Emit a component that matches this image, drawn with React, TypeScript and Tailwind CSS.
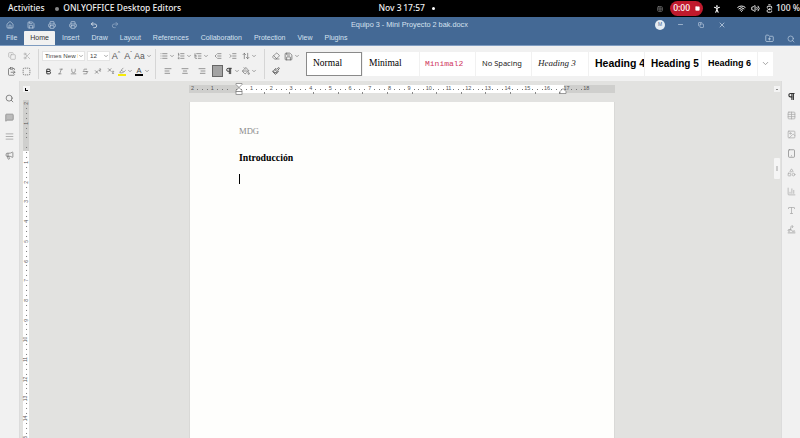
import React from "react";
import {
  Home, Save, Printer, Undo2, Redo2, Minus, X, Copy, FolderPlus, Search, Scissors, ClipboardPaste, BoxSelect,
  ChevronDown, Bold, Italic, Underline, Strikethrough, Superscript, Subscript, Highlighter, List, ListOrdered, ListTree,
  IndentDecrease, IndentIncrease, ArrowUpDown, AlignLeft, AlignCenter, AlignRight, Pilcrow, PaintBucket, Eraser, Paintbrush,
  MessageSquare, AlignJustify, Megaphone, Table, Image, Tablet, Shapes, BarChart3, Type, Signature, Grid2x2, Square,
  PersonStanding, Wifi, Volume2, BatteryCharging, Circle,
} from "lucide-react";

const sans = "font-['Liberation_Sans',Arial,sans-serif]";
const serif = "font-['Liberation_Serif','Times_New_Roman',serif]";

function Chev({ className = "" }: { className?: string }) {
  return <ChevronDown size={6} strokeWidth={2} className={"text-[#555] " + className} />;
}

function Cell({ w, children, className = "" }: { w: string; children?: React.ReactNode; className?: string }) {
  return <div className={"flex items-center justify-center gap-[1px] h-[15px] " + w + " " + className}>{children}</div>;
}

function Divider() {
  return <div className="w-px h-[30px] bg-[#d6d6d6] shrink-0" />;
}

function TextA({ mark, cls = "" }: { mark?: string; cls?: string }) {
  return (
    <span className={"text-[9px] leading-none text-[#555] " + sans + " " + cls}>
      A{mark ? <span className="text-[5px] align-super">{mark}</span> : null}
    </span>
  );
}

const styles = [
  { t: "Normal", w: "w-[56px]", c: "text-[9.5px] text-black pl-[6px] " + serif, active: true },
  { t: "Minimal", w: "w-[56px]", c: "text-[9.5px] text-black pl-[6px] " + serif },
  { t: "Minimal2", w: "w-[55px]", c: "text-[8px] text-[#d0385f] pl-[5px] font-['Liberation_Mono',monospace]" },
  { t: "No Spacing", w: "w-[55px]", c: "text-[7.5px] text-[#222] pl-[6px] font-['Noto_Sans',sans-serif]" },
  { t: "Heading 3", w: "w-[56px]", c: "text-[9px] italic text-[#222] pl-[6px] " + serif },
  { t: "Heading 4", w: "w-[55px]", c: "text-[10.5px] font-bold text-black pl-[6px] " + sans },
  { t: "Heading 5", w: "w-[56px]", c: "text-[10px] font-bold text-black pl-[6px] " + sans },
  { t: "Heading 6", w: "w-[55px]", c: "text-[9px] font-bold text-black pl-[6px] " + sans },
];

const tabs = ["Insert", "Draw", "Layout", "References", "Collaboration", "Protection", "View", "Plugins"];

const hMarks: (string | null)[] = [];
for (let i = -2; i <= 18; i++) {
  hMarks.push(i === 0 ? "" : String(Math.abs(i)));
  if (i < 18) hMarks.push(null, null, null);
}

const vMarks: (string | null)[] = [];
for (let i = -2; i <= 15; i++) {
  vMarks.push(i === 0 ? "" : String(Math.abs(i)));
  if (i < 15) vMarks.push(null, null, null);
}

function HRuler() {
  return (
    <div className="relative w-[426px] h-[8px] flex bg-[#cfcfcd] shrink-0">
      <div className="ml-[50px] w-[325px] h-full bg-white" />
      <div className={"absolute left-[0px] top-0 h-full flex items-center pl-[0.5px] " + sans}>
        <span className="w-[0.6px]" />
        {hMarks.map((m, i) => (
          <span key={i} className="w-[4.93px] shrink-0 flex justify-center text-[5.5px] leading-none text-[#555]">
            {m === null ? <span className="block w-px h-px bg-[#777]" /> : m}
          </span>
        ))}
      </div>
      {/* tab stops below the ruler */}
      <div className="absolute left-[75px] top-[7px] flex gap-[23.6px]">
        {Array.from({ length: 13 }).map((_, i) => (
          <span key={i} className="block w-px h-[1.5px] bg-[#888]" />
        ))}
      </div>
      {/* indent markers */}
      <svg className="absolute left-[45px] -top-[2px]" width="10" height="12" viewBox="0 0 10 12">
        <path d="M2 .5h6v1L5 4.5 2 1.5zM5 4.5l3 3.2v.8H2v-.8z" fill="#fff" stroke="#777" strokeWidth=".7" />
        <rect x="2" y="8.5" width="6" height="3" fill="#fff" stroke="#777" strokeWidth=".7" />
      </svg>
      <svg className="absolute left-[370px] top-[3px]" width="8" height="6" viewBox="0 0 8 6">
        <path d="M4 .5l3 3v2H1v-2z" fill="#fff" stroke="#777" strokeWidth=".7" />
      </svg>
    </div>
  );
}

function VRuler() {
  return (
    <div className="relative w-[6px] h-[338px] bg-white">
      <div className="w-full h-[51px] bg-[#cfcfcd]" />
      <div className={"absolute left-0 top-[1px] w-full flex flex-col items-center " + sans}>
        {vMarks.map((m, i) => (
          <span key={i} className="h-[4.93px] shrink-0 flex items-center justify-center text-[5px] leading-none text-[#555] -rotate-90">
            {m === null ? <span className="block w-px h-px bg-[#777]" /> : m}
          </span>
        ))}
      </div>
    </div>
  );
}

export default function App() {
  const ic = "text-[#666]";
  const dim = "text-[#aaa]";
  return (
    <div className={"w-[800px] h-[438px] overflow-hidden flex flex-col bg-[#e2e2e0] " + sans}>
      {/* GNOME top bar */}
      <div className="h-[17px] bg-black text-[#eee] flex items-center shrink-0 text-[8.5px] font-['Noto_Sans',sans-serif] font-medium">
        <span className="ml-[8px] w-[50px] leading-none">Activities</span>
        <span className="block w-[4px] h-[4px] rounded-full bg-[#888] mr-[2px] -ml-[2px]" />
        <span className="w-[319px] ml-[2px] leading-none">ONLYOFFICE Desktop Editors</span>
        <span className="w-[25px] leading-none whitespace-nowrap">Nov 3</span>
        <span className="w-[29px] leading-none">17:57</span>
        <span className="block w-[3px] h-[3px] rounded-full bg-white" />
        <div className="ml-[222px]"><Grid2x2 size={6} className="text-[#aaa]" /></div>
        <div className="ml-[7px] w-[34px] h-[15px] rounded-full bg-[#bf1a2d] flex items-center justify-center gap-[5px] text-white text-[8.5px]">
          <span className="leading-none">0:00</span>
          <Square size={5} fill="white" stroke="white" />
        </div>
        <PersonStanding size={10} strokeWidth={2.6} className="ml-[9px] text-white" />
        <Wifi size={9} strokeWidth={2.6} className="ml-[15px] text-white" />
        <Volume2 size={9} strokeWidth={2.4} className="ml-[5px] text-white" />
        <BatteryCharging size={9} strokeWidth={2.4} className="ml-[5px] text-white -rotate-90" />
        <span className="ml-[2px] leading-none whitespace-nowrap">100 %</span>
      </div>

      {/* Blue header */}
      <div className="h-[29px] bg-[#446995] shrink-0 flex flex-col border-b border-b-[#7f9cc0]">
        <div className="h-[14px] flex items-center relative mt-[1px]">
          <div className="flex items-center text-[#c9d6e6]">
            <Home size={8} className="ml-[6px]" />
            <Save size={8} className="ml-[13px]" />
            <Printer size={8} className="ml-[13px]" />
            <Printer size={8} className="ml-[13px]" />
            <Undo2 size={8} className="ml-[13px] text-white" />
            <Redo2 size={8} className="ml-[13px] text-[#9db2cc]" />
          </div>
          <span className="ml-[232px] text-[7.3px] leading-none text-[#d6e2f0] whitespace-nowrap w-[304px]">Equipo 3 - Mini Proyecto 2 bak.docx</span>
          <span className="w-[10px] h-[10px] rounded-full bg-[#e6edf3] flex items-center justify-center text-[5px] text-[#446995]">M</span>
          <Minus size={7} className="ml-[12px] text-[#d6e2f0]" />
          <Copy size={6} className="ml-[14px] text-[#d6e2f0]" />
          <X size={8} className="ml-[14px] text-[#d6e2f0]" />
        </div>
        <div className="flex-1 flex items-end">
          <span className="px-[6px] h-[13px] flex items-center text-[7px] text-[#d6e2f0]">File</span>
          <span className="ml-[1px] px-[6px] h-[14px] bg-[#f1f1f1] flex items-center text-[7px] text-[#333] rounded-t-[1px]">Home</span>
          <div className="flex ml-[1px]">
            {tabs.map((t) => (
              <span key={t} className="px-[6px] h-[13px] flex items-center text-[7px] text-[#d6e2f0]">{t}</span>
            ))}
          </div>
          <div className="ml-auto flex items-center h-[13px] text-[#bccde0]">
            <FolderPlus size={9} />
            <Search size={8} className="ml-[13px] mr-[5px]" />
          </div>
        </div>
      </div>

      {/* Toolbar */}
      <div className="h-[35px] bg-[#f1f1f1] shrink-0 flex items-center">
        <div className="w-[38px] pl-[4px] shrink-0">
          <div className="flex">
            <Cell w="w-[15px]"><Copy size={8} className={dim} /></Cell>
            <Cell w="w-[15px]"><Scissors size={8} className={dim} /></Cell>
          </div>
          <div className="flex">
            <Cell w="w-[15px]"><ClipboardPaste size={9} className={ic} /></Cell>
            <Cell w="w-[15px]"><BoxSelect size={9} className={ic} /></Cell>
          </div>
        </div>
        <Divider />
        <div className="w-[116px] pl-[3px] shrink-0">
          <div className="flex items-center h-[15px]">
            <div className="w-[43px] h-[10px] bg-white border border-[#e4e4e4] flex items-center justify-between pl-[2px] text-[6.2px] text-[#444] overflow-hidden whitespace-nowrap">
              <span className="overflow-hidden">Times New Ro</span><Chev className="shrink-0" />
            </div>
            <div className="ml-[2px] w-[23px] h-[10px] bg-white border border-[#e4e4e4] flex items-center justify-between pl-[2px] text-[6.2px] text-[#444]">
              <span>12</span><Chev />
            </div>
            <Cell w="w-[12px]"><TextA mark="^" /></Cell>
            <Cell w="w-[12px]"><TextA mark="ˇ" cls="text-[8px]" /></Cell>
            <Cell w="w-[18px]"><span className="text-[8.5px] text-[#555] leading-none">Aa</span><Chev /></Cell>
          </div>
          <div className="flex items-center h-[15px]">
            <Cell w="w-[12.5px]"><Bold size={7} strokeWidth={3.4} className="text-[#333]" /></Cell>
            <Cell w="w-[12.5px]"><Italic size={7} className={ic} /></Cell>
            <Cell w="w-[12.5px]"><Underline size={7} className={ic} /></Cell>
            <Cell w="w-[12.5px]"><Strikethrough size={7} className={ic} /></Cell>
            <Cell w="w-[12.5px]"><Superscript size={8} className={ic} /></Cell>
            <Cell w="w-[12.5px]"><Subscript size={8} className={ic} /></Cell>
            <Cell w="w-[17px]">
              <span className="flex flex-col items-center"><Highlighter size={7} className={ic} /><span className="block w-[8px] h-[2px] bg-[#f5e90a]" /></span>
              <Chev />
            </Cell>
            <Cell w="w-[17px]">
              <span className="flex flex-col items-center"><span className="text-[7.5px] leading-[7px] text-[#444]">A</span><span className="block w-[8px] h-[2px] bg-black" /></span>
              <Chev />
            </Cell>
          </div>
        </div>
        <Divider />
        <div className="w-[108px] pl-[3px] shrink-0">
          <div className="flex">
            <Cell w="w-[17px]"><List size={8} className={ic} /><Chev /></Cell>
            <Cell w="w-[17px]"><ListOrdered size={8} className={ic} /><Chev /></Cell>
            <Cell w="w-[17px]"><ListTree size={8} className={ic} /><Chev /></Cell>
            <Cell w="w-[15px]"><IndentDecrease size={8} className={ic} /></Cell>
            <Cell w="w-[15px]"><IndentIncrease size={8} className={ic} /></Cell>
            <Cell w="w-[18px]"><ArrowUpDown size={8} className={ic} /><Chev /></Cell>
          </div>
          <div className="flex">
            <Cell w="w-[17px]"><AlignLeft size={8} className={ic} /></Cell>
            <Cell w="w-[17px]"><AlignCenter size={8} className={ic} /></Cell>
            <Cell w="w-[17px]"><AlignRight size={8} className={ic} /></Cell>
            <Cell w="w-[15px]"><span className="block w-[11px] h-[12px] bg-[#a3a3a3] border border-[#666]" /></Cell>
            <Cell w="w-[15px]"><Pilcrow size={8} strokeWidth={3} className="text-[#444]" /><Chev /></Cell>
            <Cell w="w-[18px]"><PaintBucket size={8} className={ic} /><Chev /></Cell>
          </div>
        </div>
        <Divider />
        <div className="w-[40px] pl-[3px] shrink-0">
          <div className="flex">
            <Cell w="w-[15px]"><Eraser size={8} className={ic} /></Cell>
            <Cell w="w-[17px]"><Save size={9} className={ic} /><Chev /></Cell>
          </div>
          <div className="flex">
            <Cell w="w-[15px]"><Paintbrush size={8} strokeWidth={2.6} className="text-[#555]" /></Cell>
          </div>
        </div>
        <div className="h-[24px] flex items-stretch gap-[1px] shrink-0 ml-[1px]">
          {styles.map((s) => (
            <div
              key={s.t}
              className={
                "flex items-center bg-white whitespace-nowrap overflow-hidden leading-none " + s.w + " " + s.c +
                (s.active ? " border border-[#8a8a8a]" : "")
              }
            >
              {s.t}
            </div>
          ))}
          <div className="w-[15px] bg-white flex items-center justify-center"><ChevronDown size={9} className="text-[#888]" /></div>
        </div>
      </div>

      {/* Main */}
      <div className="flex-1 flex min-h-0">
        <div className="w-[20px] bg-[#f1f1f1] border-r border-r-[#dcdcdc] flex flex-col items-center pt-[13px] gap-[10px] shrink-0">
          <Search size={9} className="text-[#666]" />
          <MessageSquare size={9} fill="#bbb" className="text-[#888]" />
          <AlignJustify size={9} className="text-[#999]" />
          <Megaphone size={9} className="text-[#777]" />
        </div>

        <div className="flex-1 flex min-w-0 bg-[#e2e2e0]">
          <div className="w-[10px] ml-[3px] pt-[5px] flex flex-col shrink-0">
            <div className="w-[7px] h-[7px] bg-[#f3f3f3] flex items-end justify-start p-[1.5px]">
              <span className="block w-[3px] h-[3px] border-l border-b border-black" />
            </div>
            <div className="mt-[8px]"><VRuler /></div>
          </div>
          <div className="ml-[156px] w-[426px] shrink-0 pt-[4px] flex flex-col">
            <HRuler />
            <div className="mt-[9px] flex-1 bg-[#fefefc] border-l border-r border-[#d9d9d7] pl-[49px] pt-[24px]">
              <div className={"text-[8.6px] leading-[10px] text-[#8a8a8a] " + serif}>MDG</div>
              <div className={"mt-[16px] text-[9.8px] leading-[12px] font-bold text-black " + serif}>Introducción</div>
              <div className="mt-[10px] w-px h-[10px] bg-black" />
            </div>
          </div>
          <div className="ml-auto w-[7px] mr-[1px] pt-[5px] flex flex-col items-center shrink-0">
            <span className="w-[6px] h-[6px] bg-[#f3f3f3] flex items-center justify-center"><span className="block w-[2px] h-px bg-[#888]" /></span>
            <span className="mt-[66px] w-[6px] h-[21px] bg-[#f5f5f5] rounded-[1px] flex items-center justify-center">
              <span className="block w-[2px] h-[5px] bg-[#ccc]" />
            </span>
          </div>
        </div>

        <div className="w-[19px] bg-[#f1f1f1] border-l border-l-[#dcdcdc] flex flex-col items-center pt-[11px] gap-[10px] shrink-0">
          <Pilcrow size={9} strokeWidth={3} className="text-[#333]" />
          <Table size={9} className="text-[#aaa]" />
          <Image size={9} className="text-[#aaa]" />
          <Tablet size={9} className="text-[#888]" />
          <Shapes size={9} className="text-[#aaa]" />
          <BarChart3 size={9} className="text-[#aaa]" />
          <Type size={9} className="text-[#aaa]" />
          <Signature size={9} className="text-[#999]" />
        </div>
      </div>
    </div>
  );
}
